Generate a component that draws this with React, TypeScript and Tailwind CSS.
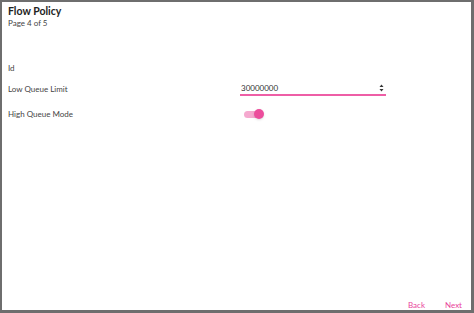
import React, { useState } from "react";

const FONT = { fontFamily: '"Segoe UI", Lato, "Open Sans", sans-serif' };

export default function App() {
  const [limite, setLimite] = useState("30000000");
  const [actif, setActif] = useState(true);

  return (
    <div
      style={FONT}
      className="w-[474px] h-[313px] bg-white border-l-2 border-t-2 border-r-[3px] border-b-[3px] border-[#6e6e6e] flex flex-col text-[#333]"
    >
      <div className="px-[6px] pt-[3px]">
        <div className="text-[10.5px] font-bold leading-[13px] text-[#222]">Flow Policy</div>
        <div className="text-[8px] leading-[10px] text-[#444]">Page 4 of 5</div>
      </div>

      <div className="flex flex-col px-[6px] mt-[34px] text-[8px] text-[#444]">
        <div className="h-[13px] leading-[13px]">Id</div>
        <div className="flex items-center h-[20px] mt-[4px]">
          <div className="w-[232px]">Low Queue Limit</div>
          <div className="w-[146px] h-[13px] flex items-center border-b-2 border-b-[#ee5ea6]">
            <input
              value={limite}
              onChange={(e) => setLimite(e.target.value)}
              style={FONT}
              className="flex-1 min-w-0 bg-transparent outline-none text-[8px] text-[#333] pl-[1px]"
            />
            <svg width="5" height="8" viewBox="0 0 5 8" className="mr-[2px]">
              <path d="M2.5 0.5 L4.5 3 L0.5 3 Z" fill="#333" />
              <path d="M2.5 7.5 L4.5 5 L0.5 5 Z" fill="#333" />
            </svg>
          </div>
        </div>
        <div className="flex items-center h-[20px] mt-[5px]">
          <div className="w-[236px]">High Queue Mode</div>
          <button
            type="button"
            onClick={() => setActif(!actif)}
            className="relative w-[20px] h-[12px] flex items-center cursor-pointer"
          >
            <span className={`block w-[18px] h-[7px] rounded-full ${actif ? "bg-[#f5a9cf]" : "bg-[#cfcfcf]"}`} />
            <span
              className={`absolute top-[1px] w-[10px] h-[10px] rounded-full shadow-sm ${
                actif ? "left-[10px] bg-[#ec4d9c]" : "left-0 bg-[#f2f2f2]"
              }`}
            />
          </button>
        </div>
      </div>

      <div className="flex-1" />

      <div className="flex justify-end gap-[20px] pr-[9px] text-[8px] leading-[9px] text-[#e9449b]">
        <button type="button" className="cursor-pointer">Back</button>
        <button type="button" className="cursor-pointer">Next</button>
      </div>
    </div>
  );
}
